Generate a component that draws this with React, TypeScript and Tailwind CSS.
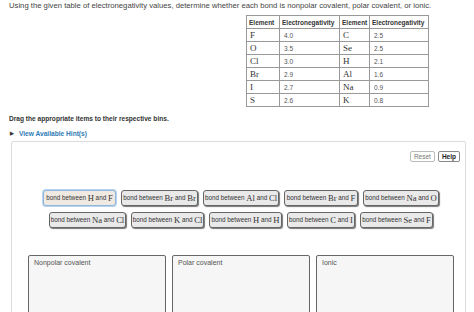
import React from "react";

const sans = { fontFamily: '"Liberation Sans", Arial, sans-serif' };

const rows: [string, string, string, string][] = [
  ["F", "4.0", "C", "2.5"],
  ["O", "3.5", "Se", "2.5"],
  ["Cl", "3.0", "H", "2.1"],
  ["Br", "2.9", "Al", "1.6"],
  ["I", "2.7", "Na", "0.9"],
  ["S", "2.6", "K", "0.8"],
];

type Chip = { a: string; b: string; w: string; active?: boolean };

const row1: Chip[] = [
  { a: "H", b: "F", w: "w-[73px]", active: true },
  { a: "Br", b: "Br", w: "w-[77px]" },
  { a: "Al", b: "Cl", w: "w-[76px]" },
  { a: "Br", b: "F", w: "w-[74px]" },
  { a: "Na", b: "O", w: "w-[76px]" },
];
const row2: Chip[] = [
  { a: "Na", b: "Cl", w: "w-[77px]" },
  { a: "K", b: "Cl", w: "w-[73px]" },
  { a: "H", b: "H", w: "w-[73px]" },
  { a: "C", b: "I", w: "w-[68px]" },
  { a: "Se", b: "F", w: "w-[73px]" },
];

function Sym({ s }: { s: string }) {
  return (
    <span className="text-[8.6px] font-['Liberation_Serif','Times_New_Roman',serif]">{s}</span>
  );
}

function ChipEl({ c }: { c: Chip }) {
  return (
    <div
      className={`${c.w} h-[16px] flex items-center justify-center whitespace-nowrap rounded-[3px] border text-[6.3px] text-[#333] ${
        c.active
          ? "bg-[#efe9e1] border-[#8fb6dc] shadow-[0_0_0_1px_#b9d4ee]"
          : "bg-[#e9e9e9] border-[#666] shadow-[1px_1px_1px_#777]"
      }`}
    >
      <span>bond between&nbsp;</span>
      <Sym s={c.a} />
      <span>&nbsp;and&nbsp;</span>
      <Sym s={c.b} />
    </div>
  );
}

export default function App() {
  return (
    <div className="w-[474px] h-[312px] overflow-hidden bg-white text-[#333]" style={sans}>
      <p className="pl-[9px] pt-[1px] h-[15px] text-[7.7px] leading-[9px] text-[#444] whitespace-nowrap">
        Using the given table of electronegativity values, determine whether each bond is nonpolar covalent, polar covalent, or ionic.
      </p>
      <div className="pl-[246px]">
        <table className="table-fixed w-[182px] border-collapse text-[6.5px] text-[#333]">
          <colgroup>
            <col className="w-[33px]" />
            <col className="w-[60px]" />
            <col className="w-[30px]" />
            <col className="w-[59px]" />
          </colgroup>
          <thead>
            <tr className="h-[13px]">
              {["Element", "Electronegativity", "Element", "Electronegativity"].map((h, i) => (
                <th key={i} className="border border-[#999] px-[2px] text-left font-bold leading-[11px] whitespace-nowrap overflow-hidden">
                  {h}
                </th>
              ))}
            </tr>
          </thead>
          <tbody>
            {rows.map((r, i) => (
              <tr key={i} className="h-[13px]">
                <td className="border border-[#999] pl-[3px] leading-[11px] text-[9px] font-['Liberation_Serif','Times_New_Roman',serif]">
                  {r[0]}
                </td>
                <td className="border border-[#999] pl-[4px] leading-[11px] text-[#555]">{r[1]}</td>
                <td className="border border-[#999] pl-[3px] leading-[11px] text-[9px] font-['Liberation_Serif','Times_New_Roman',serif]">
                  {r[2]}
                </td>
                <td className="border border-[#999] pl-[4px] leading-[11px] text-[#555]">{r[3]}</td>
              </tr>
            ))}
          </tbody>
        </table>
      </div>
      <p className="pl-[9px] mt-[7px] h-[9px] text-[6.6px] leading-[9px] font-bold text-[#333]">
        Drag the appropriate items to their respective bins.
      </p>
      <div className="pl-[10px] mt-[6px] h-[9px] flex items-center gap-[5px] text-[6.6px] leading-[9px] font-bold text-[#2f7bb5]">
        <span className="text-[5px] text-[#333]">▶</span>
        <span>View Available Hint(s)</span>
      </div>
      <div className="ml-[11px] mt-[3px] w-[455px] h-[200px] border border-[#dcdcdc] rounded-[2px]">
        <div className="flex justify-end gap-[3px] pt-[9px] pr-[5px]">
          <div className="h-[11px] px-[3px] flex items-center border border-[#bbb] rounded-[2px] text-[6.5px] text-[#777]">
            Reset
          </div>
          <div className="h-[11px] px-[3px] flex items-center border border-[#888] rounded-[2px] text-[6.5px] font-bold text-[#222]">
            Help
          </div>
        </div>
        <div className="mt-[28px] pl-[5px] flex flex-col gap-[6px]">
          <div className="flex justify-center gap-[5px]">
            {row1.map((c, i) => (
              <ChipEl key={i} c={c} />
            ))}
          </div>
          <div className="flex justify-center gap-[5px]">
            {row2.map((c, i) => (
              <ChipEl key={i} c={c} />
            ))}
          </div>
        </div>
        <div className="mt-[27px] pl-[16px] flex gap-[6px]">
          {["Nonpolar covalent", "Polar covalent", "Ionic"].map((t) => (
            <div
              key={t}
              className="w-[138px] h-[80px] bg-[#f6f6f6] border border-[#666] rounded-[2px] px-[5px] pt-[2px] text-[7px] text-[#555]"
            >
              {t}
            </div>
          ))}
        </div>
      </div>
    </div>
  );
}
